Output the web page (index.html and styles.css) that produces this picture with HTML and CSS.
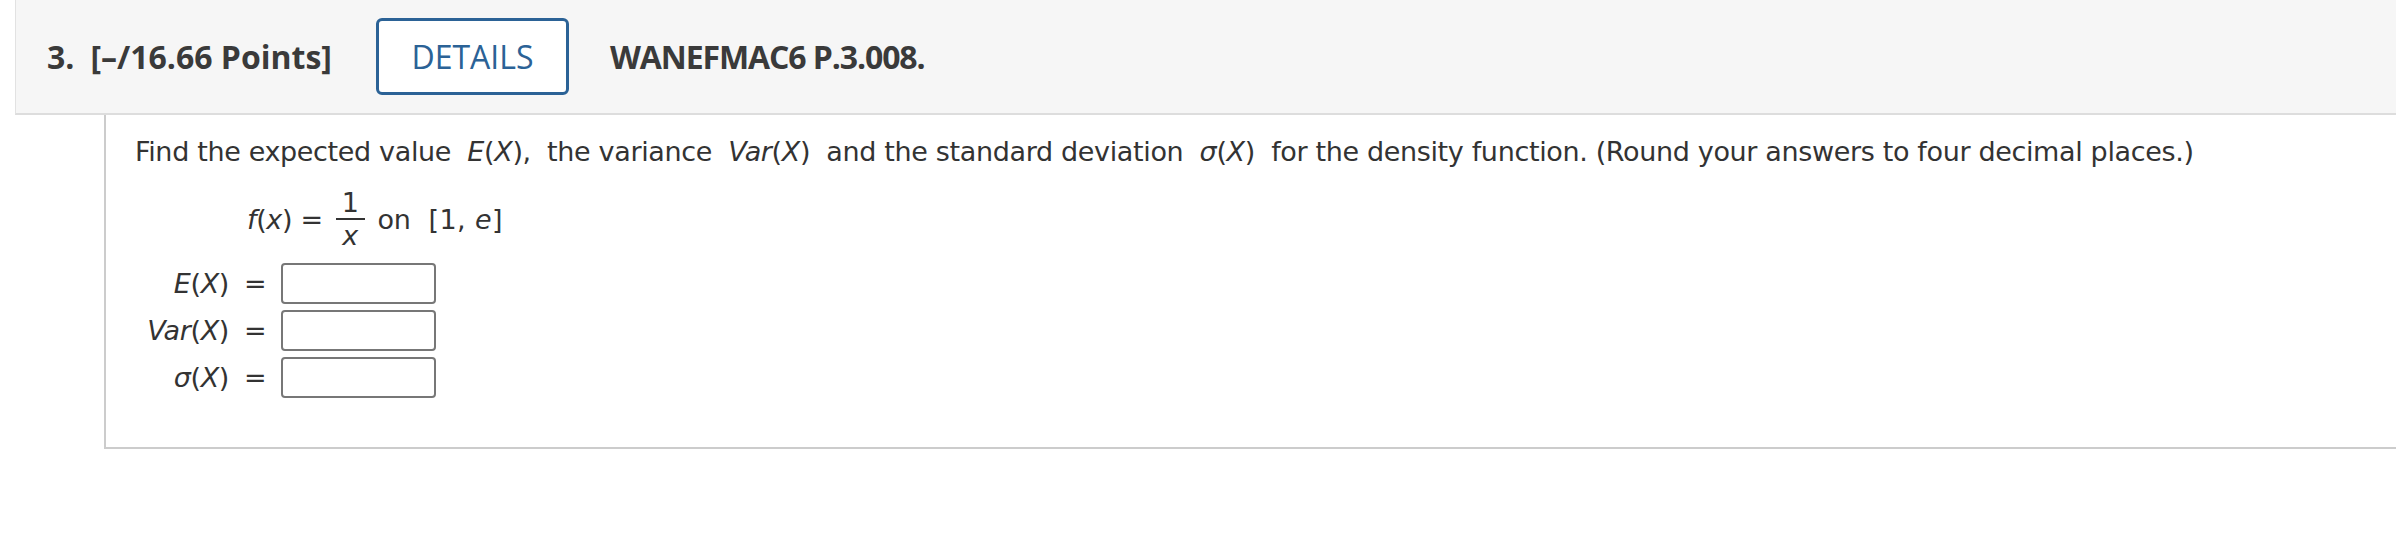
FILE: index.html
```html
<!DOCTYPE html>
<html lang="en">
<head>
    <meta charset="UTF-8">
    <title>WANEFMAC6 P.3.008.</title>
    <link rel="stylesheet" href="styles.css">
</head>
<body>
    <div class="question">
        <div class="question-header">
            <span class="q-number">3.</span>
            <span class="q-points">[&ndash;/16.66 Points]</span>
            <button class="details-button">DETAILS</button>
            <span class="q-ref">WANEFMAC6 P.3.008.</span>
        </div>
        <div class="question-body">
            <p class="prompt">Find the expected value <span class="math"><i>E</i>(<i>X</i>),</span> the variance <span class="math"><i>Var</i>(<i>X</i>)</span> and the standard deviation <span class="math"><i>&sigma;</i>(<i>X</i>)</span> for the density function. (Round your answers to four decimal places.)</p>
            <div class="formula">
                <span><i>f</i>(<i>x</i>) =</span>
                <span class="fraction">
                    <span class="num">1</span>
                    <span class="den"><i>x</i></span>
                </span>
                <span>on</span>
                <span class="interval">[1, <i>e</i>]</span>
            </div>
            <div class="answers">
                <span class="label"><i>E</i>(<i>X</i>)</span>
                <span class="eq">=</span>
                <input class="answer-box" type="text">
                <span class="label"><i>Var</i>(<i>X</i>)</span>
                <span class="eq">=</span>
                <input class="answer-box" type="text">
                <span class="label"><i>&sigma;</i>(<i>X</i>)</span>
                <span class="eq">=</span>
                <input class="answer-box" type="text">
            </div>
        </div>
    </div>
</body>
</html>
```

FILE: styles.css
```css
body {
    margin: 0;
    background-color: #fff;
    color: #333;
    font-family: "Open Sans", "Liberation Sans", sans-serif;
}

.question {
    margin-left: 15px;
}

/* Серая шапка вопроса */
.question-header {
    height: 113px;
    display: flex;
    align-items: center;
    padding-left: 31px;
    background-color: #f6f6f6;
    border-left: 1px solid #e2e2e2;
    border-bottom: 2px solid #dddddd;
    font-size: 32px;
    font-weight: bold;
    color: #3a3a3a;
}

.q-points {
    margin-left: 16px;
}

.details-button {
    margin-left: 44px;
    width: 193px;
    height: 77px;
    background-color: #fff;
    border: 3px solid #2b6296;
    border-radius: 6px;
    color: #2b6296;
    font-family: "Open Sans", sans-serif;
    font-size: 32px;
    font-weight: normal;
}

.q-ref {
    margin-left: 41px;
    letter-spacing: -1.1px;
}

/* Белый блок с условием */
.question-body {
    margin-left: 89px;
    height: 332px;
    padding-left: 29px;
    border-left: 2px solid #cccccc;
    border-bottom: 2px solid #cccccc;
    font-family: "DejaVu Sans", Verdana, sans-serif;
    font-size: 27px;
    letter-spacing: -0.35px;
    color: #333;
}

.prompt {
    margin: 0;
    padding-top: 21px;
}

.math {
    margin: 0 8px;
}

.formula {
    display: flex;
    align-items: center;
    gap: 13px;
    margin-top: 22px;
    padding-left: 112px;
}

.fraction {
    display: inline-flex;
    flex-direction: column;
    align-items: center;
    line-height: 1;
}

.fraction .num {
    padding: 0 6px 2px;
    border-bottom: 2px solid #333;
}

.fraction .den {
    padding-top: 2px;
}

.interval {
    margin-left: 5px;
    letter-spacing: 0.4px;
}

.answers {
    display: grid;
    grid-template-columns: 94px auto auto;
    justify-content: start;
    align-items: center;
    column-gap: 15px;
    row-gap: 6px;
    margin-top: 14px;
}

.answers .label {
    justify-self: end;
}

.answer-box {
    width: 155px;
    height: 41px;
    box-sizing: border-box;
    border: 2px solid #777;
    border-radius: 4px;
}
```
